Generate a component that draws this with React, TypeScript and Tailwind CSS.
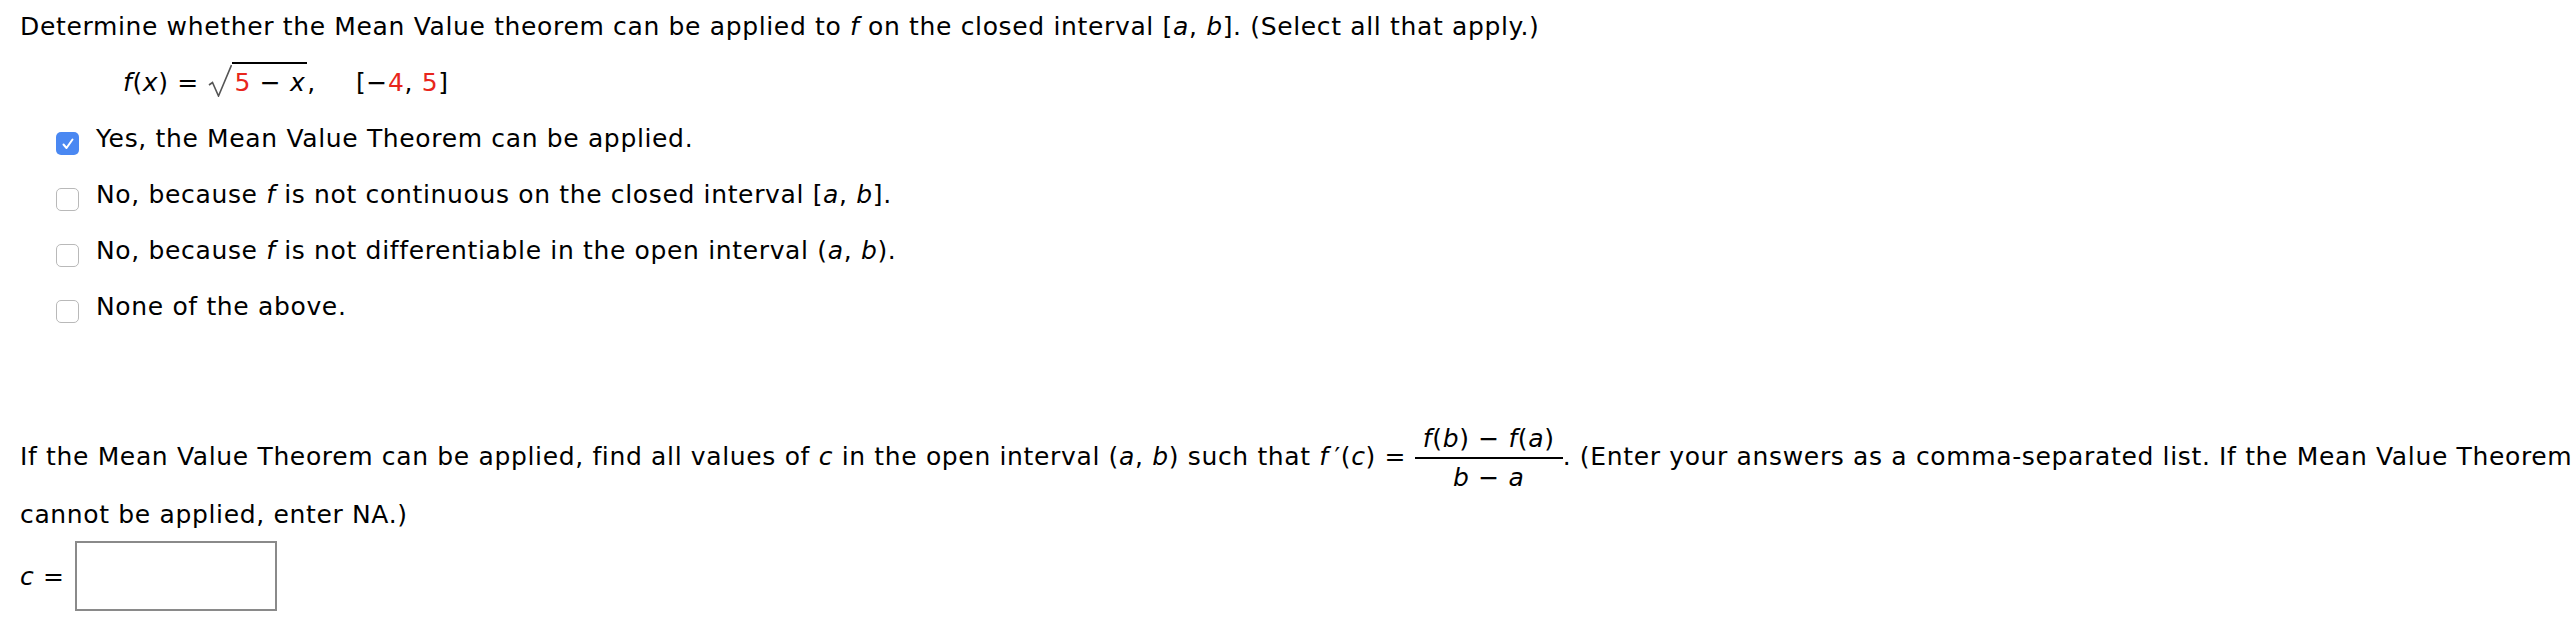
import React from 'react';

const font = { fontFamily: '"DejaVu Sans", Verdana, sans-serif' };

function Box({ checked }: { checked?: boolean }) {
  if (checked) {
    return (
      <span className="mt-[21px] flex h-[23px] w-[23px] shrink-0 items-center justify-center rounded-[5px] bg-[#4a88f2]">
        <svg width="14" height="14" viewBox="0 0 14 14">
          <path d="M2.5 7.5 L5.5 11 L11.5 2.5" fill="none" stroke="white" strokeWidth="2" strokeLinecap="round" strokeLinejoin="round" />
        </svg>
      </span>
    );
  }
  return <span className="mt-[21px] block h-[23px] w-[23px] shrink-0 rounded-[5px] border-[1.5px] border-[#b9b9b9] bg-white" />;
}

function Option({ checked, children }: { checked?: boolean; children: React.ReactNode }) {
  return (
    <div className="flex h-[56px] items-start pl-[36px]">
      <Box checked={checked} />
      <span className="ml-[17px] leading-[56px] whitespace-nowrap">{children}</span>
    </div>
  );
}

export default function App() {
  return (
    <div className="min-h-[640px] w-[2576px] bg-white text-[25px] tracking-[0.65px] text-black" style={font}>
      <div className="-mt-[1px] px-[20px]">
        {/* Question */}
        <div className="h-[56px] leading-[56px] whitespace-nowrap">
          Determine whether the Mean Value theorem can be applied to <i>f</i> on the closed interval [<i>a</i>, <i>b</i>]. (Select all that apply.)
        </div>

        {/* Function */}
        <div className="h-[56px] pl-[103px] leading-[56px] whitespace-nowrap">
          <i>f</i>(<i>x</i>) = {' '}
          <svg className="inline-block align-[-6px]" width="24" height="33" viewBox="0 0 24 33">
            <path d="M1 21 L4.5 18.5 L10.5 32 L23.5 1" fill="none" stroke="#555" strokeWidth="1.6" />
          </svg>
          <span className="border-t-[2px] border-black pt-[4px] pl-[3px] pr-[2px]">
            <span className="text-[#e8261c]">5</span> − <i>x</i>
          </span>
          ,
          <span className="ml-[40px]">
            [−<span className="text-[#e8261c]">4</span>, <span className="text-[#e8261c]">5</span>]
          </span>
        </div>

        <Option checked>Yes, the Mean Value Theorem can be applied.</Option>
        <Option>
          No, because <i>f</i> is not continuous on the closed interval [<i>a</i>, <i>b</i>].
        </Option>
        <Option>
          No, because <i>f</i> is not differentiable in the open interval (<i>a</i>, <i>b</i>).
        </Option>
        <Option>None of the above.</Option>

        {/* Part b */}
        <p className="mt-[85px] leading-[38px] whitespace-nowrap">
          If the Mean Value Theorem can be applied, find all values of <i>c</i> in the open interval (<i>a</i>, <i>b</i>) such that{' '}
          <i>f</i>&thinsp;′(<i>c</i>) ={' '}
          <span className="inline-flex flex-col items-center align-middle">
            <span className="px-[8px] leading-[37px]">
              <i>f</i>(<i>b</i>) − <i>f</i>(<i>a</i>)
            </span>
            <span className="h-[2px] w-full bg-black" />
            <span className="leading-[37px]">
              <i>b</i> − <i>a</i>
            </span>
          </span>
          . (Enter your answers as a comma-separated list. If the Mean Value Theorem
          <br />
          cannot be applied, enter NA.)
        </p>

        <div className="mt-[7px] flex items-center">
          <span className="leading-[29px]">
            <i>c</i> =
          </span>
          <input type="text" className="ml-[10px] h-[70px] w-[202px] border-2 border-[#8a8a8a] bg-white outline-none" />
        </div>
      </div>
    </div>
  );
}
